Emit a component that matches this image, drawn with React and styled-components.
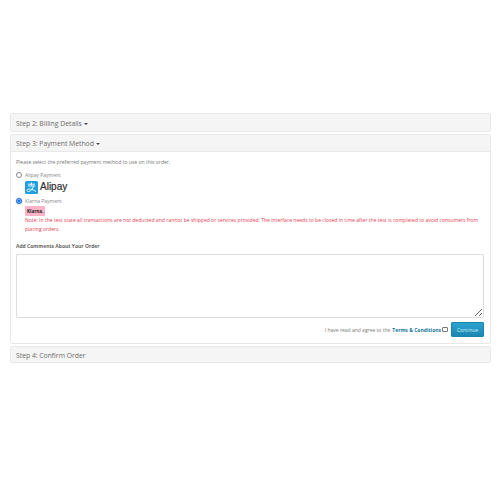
import React from 'react';
import styled, { createGlobalStyle } from 'styled-components';

const GlobalStyle = createGlobalStyle`
html, body {
  margin: 0;
  padding: 0;
  background: #fff;
  font-family: "Open Sans", sans-serif;
  color: #666;
}
`;

const Page = styled.div`
width: 500px;
height: 500px;
box-sizing: border-box;
padding: 113px 9px 0 10px;
display: flex;
flex-direction: column;
gap: 2px;
overflow: hidden;
`;

const Panel = styled.div`
border: 1px solid #e8e8e8;
border-radius: 2px;
background: #fff;
`;

const PanelHeading = styled.div`
height: ${props => props.$height}px;
box-sizing: border-box;
padding-left: 5px;
padding-top: 1px;
display: flex;
align-items: center;
gap: 2px;
background: #f5f5f5;
font-size: 6.8px;
color: #6c6c6c;
`;

const Caret = styled.span`
width: 0;
height: 0;
margin-top: 1px;
border-left: 2px solid transparent;
border-right: 2px solid transparent;
border-top: 2px solid #444;
`;

const PanelBody = styled.div`
height: 192px;
box-sizing: border-box;
padding: 6px 6px 0 5px;
border-top: 1px solid #e8e8e8;
display: flex;
flex-direction: column;
font-size: 5.07px;
line-height: 8px;
`;

const Intro = styled.p`
margin: 0 0 4px;
color: #777;
`;

const RadioRow = styled.label`
display: flex;
align-items: center;
gap: 3px;
height: 9px;
font-size: 5px;
color: #888;
`;

const Radio = styled.input`
appearance: none;
width: 6px;
height: 6px;
box-sizing: border-box;
margin: 0;
border: 0.6px solid #888;
border-radius: 50%;
background: #fff;

&:checked {
  border: 1.4px solid #1a73e8;
  background: #1a73e8;
  box-shadow: 0 0 0 0.5px #cfe0f7, inset 0 0 0 0.4px #fff;
}
`;

const AlipayLogo = styled.div`
display: flex;
align-items: center;
gap: 2px;
height: 14px;
margin: 1px 0 2px 9px;
font-family: "Liberation Sans", sans-serif;
font-size: 10px;
font-weight: 400;
color: #2d2d2d;
-webkit-text-stroke: 0.2px #2d2d2d;
`;

const KlarnaBadge = styled.div`
align-self: flex-start;
margin: 1px 0 0 9px;
padding: 0 2px;
height: 10px;
line-height: 10px;
background: #ffb3c7;
border-radius: 1px;
font-size: 4.6px;
font-weight: 700;
color: #222;
`;

const Notice = styled.p`
margin: 0 0 0 9px;
color: #e4404f;
font-size: 5.05px;
line-height: 9px;
`;

const FieldLabel = styled.div`
margin-top: 8px;
font-size: 5px;
font-weight: 700;
color: #666;
`;

const Comments = styled.textarea`
display: block;
width: 468px;
height: 64px;
box-sizing: border-box;
margin-top: 4px;
border: 1px solid #ddd;
border-radius: 1px;
background: #fff;
outline: none;
`;

const Actions = styled.div`
display: flex;
justify-content: flex-end;
align-items: center;
margin-top: 4px;
font-size: 5px;
color: #777;
`;

const TermsLink = styled.a`
margin-left: 2px;
margin-right: 1px;
font-weight: 700;
color: #23769c;
`;

const Agree = styled.input`
appearance: none;
width: 6px;
height: 5px;
box-sizing: border-box;
margin: 0 3px 0 0;
border: 0.6px solid #777;
border-radius: 1px;
background: #fff;
`;

const ContinueButton = styled.button`
width: 33px;
height: 15px;
padding: 0;
border: 1px solid #1b84ad;
border-radius: 1px;
background: linear-gradient(#2ba3cf, #1c87b2);
color: #d5edf7;
font-family: inherit;
font-size: 5px;
`;

const AlipayMark = () => (
  <svg width="13" height="13" viewBox="0 0 13 13">
    <rect width="13" height="13" rx="1.5" fill="#1f9fe0" />
    <path d="M6.500 1.500v3M3 3.200h7M2.800 5h7.400" stroke="#fff" strokeWidth="0.9" fill="none" />
    <path d="M8.600 5c-.7 2.800-2.600 5-5 5.600-1.600.3-2.200-1.600-.8-2.300 1.800-.9 5-.2 8.200 2.300" stroke="#fff" strokeWidth="0.9" fill="none" />
  </svg>
);

export default function App() {
  return (
    <Page>
      <GlobalStyle />
      <Panel>
        <PanelHeading $height={17}>Step 2: Billing Details <Caret /></PanelHeading>
      </Panel>
      <Panel>
        <PanelHeading $height={16}>Step 3: Payment Method <Caret /></PanelHeading>
        <PanelBody>
          <Intro>Please select the preferred payment method to use on this order.</Intro>
          <RadioRow>
            <Radio type="radio" name="payment" />
            Alipay Payment
          </RadioRow>
          <AlipayLogo>
            <AlipayMark />
            Alipay
          </AlipayLogo>
          <RadioRow>
            <Radio type="radio" name="payment" defaultChecked />
            Klarna Payment
          </RadioRow>
          <KlarnaBadge>Klarna.</KlarnaBadge>
          <Notice>
            Note: In the test state all transactions are not deducted and cannot be shipped or services provided. The interface needs to be closed in time after the test is completed to avoid consumers from placing orders.
          </Notice>
          <FieldLabel>Add Comments About Your Order</FieldLabel>
          <Comments />
          <Actions>
            I have read and agree to the <TermsLink>Terms &amp; Conditions</TermsLink>
            <Agree type="checkbox" />
            <ContinueButton>Continue</ContinueButton>
          </Actions>
        </PanelBody>
      </Panel>
      <Panel>
        <PanelHeading $height={15}>Step 4: Confirm Order</PanelHeading>
      </Panel>
    </Page>
  );
}
